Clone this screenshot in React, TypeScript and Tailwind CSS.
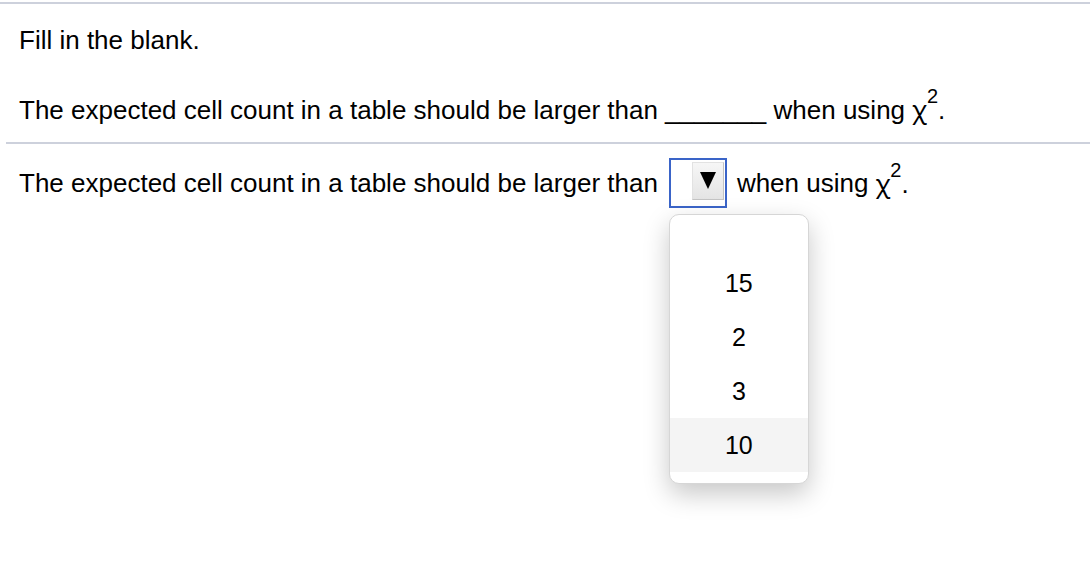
import { useState } from 'react';

const options = ['15', '2', '3', '10'];

// chi squared, with the raised 2 and the full stop
const Chi = () => (
    <span className="ml-[7px]">
        <span className="font-['Noto_Sans'] text-[25px]">χ</span>
        <sup className="text-[20px] top-[-16px]">2</sup>.
    </span>
);

const App = () => {
    const [hovered] = useState('10');

    return (
        <div
            className="w-[1090px] h-[562px] bg-white text-black pt-[2px] overflow-hidden"
            style={{ fontFamily: '"Liberation Sans", Arial, sans-serif' }}
        >
            {/* top rule */}
            <div className="border-t-2 border-[#cdd1dc]" />

            <div className="pl-[19px] text-[26px] leading-[30px]">
                <p className="mt-[21px]">Fill in the blank.</p>

                {/* plain text version */}
                <p className="mt-[39px] whitespace-pre">
                    The expected cell count in a table should be larger than _______ when using<Chi />
                </p>
            </div>

            {/* divider */}
            <div className="mt-[17px] ml-[6px] border-t-2 border-[#cdd1dc]" />

            {/* dropdown version */}
            <div className="mt-[14px] pl-[19px] h-[50px] flex items-center text-[26px] leading-[30px]">
                <span className="whitespace-pre">The expected cell count in a table should be larger than</span>
                <div className="relative ml-[11px] w-[58px] h-[50px] border-2 border-[#3a64c8] bg-white flex items-center justify-end pr-[1px]">
                    <div className="w-[32px] h-[38px] mb-[5px] border border-[#c4c4c4] border-t-[#e2e2e2] border-l-[#e2e2e2] bg-gradient-to-b from-[#f6f6f6] to-[#e4e4e4] flex items-center justify-center">
                        <svg width="18" height="19" viewBox="0 0 18 19">
                            <path d="M1 1 L17 1 L9 18 Z" fill="#000" />
                        </svg>
                    </div>

                    {/* open list */}
                    <div className="absolute left-[-2px] top-[54px] w-[140px] bg-white border border-[#d6d6d6] rounded-[10px] pt-[41px] pb-[11px] shadow-[0_10px_26px_rgba(0,0,0,0.22)] overflow-hidden">
                        {options.map((opt) => (
                            <div
                                key={opt}
                                className={`h-[54px] flex items-center justify-center text-[25px] ${opt === hovered ? 'bg-[#f4f4f4]' : ''}`}
                            >
                                {opt}
                            </div>
                        ))}
                    </div>
                </div>
                <span className="ml-[10px] whitespace-pre">when using</span>
                <Chi />
            </div>
        </div>
    );
};

export default App;
